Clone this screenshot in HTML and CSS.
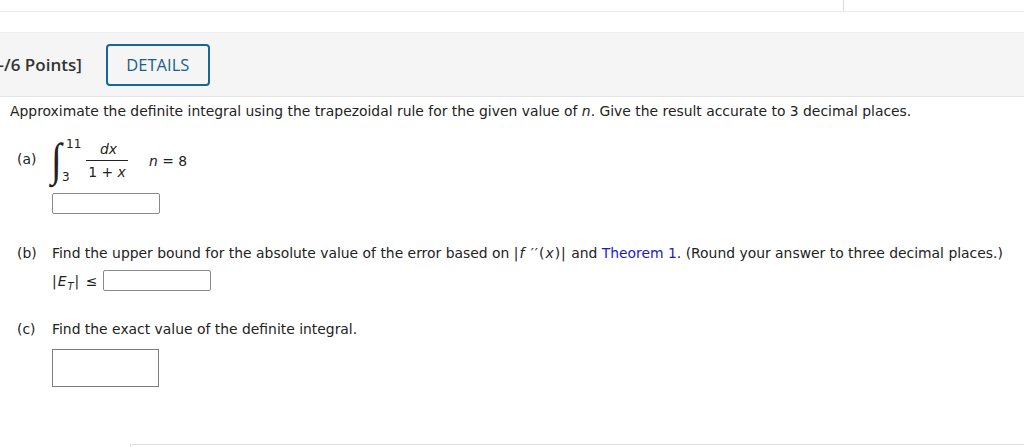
FILE: index.html
```html
<!DOCTYPE html>
<html>
<head>
<meta charset="utf-8">
<link rel="stylesheet" href="styles.css">
</head>
<body>
<div class="topbar"><div class="tb-left"></div><div class="tb-right"></div></div>
<div class="gap"></div>
<div class="header">
  <div class="points">[–/6 Points]</div>
  <button class="details">DETAILS</button>
</div>
<div class="question">
  <p class="prompt">Approximate the definite integral using the trapezoidal rule for the given value of <i>n</i>. Give the result accurate to 3 decimal places.</p>

  <div class="part part-a">
    <span class="label">(a)</span>
    <div class="body">
      <div class="math">
        <span class="int">∫</span>
        <span class="limits"><span class="up">11</span><span class="lo">3</span></span>
        <span class="frac"><span class="num"><i>dx</i></span><span class="den">1 + <i>x</i></span></span>
        <span class="neq"><i>n</i> = 8</span>
      </div>
      <span class="answer small"></span>
    </div>
  </div>

  <div class="part part-b">
    <span class="label">(b)</span>
    <div class="body">
      <p class="text">Find the upper bound for the absolute value of the error based on <span class="fpp">|<i>f</i> ′′(<i>x</i>)|</span> and <a class="link">Theorem 1</a>. (Round your answer to three decimal places.)</p>
      <div class="ineq"><span class="et">|<i>E<sub>T</sub></i>| ≤</span><span class="answer small"></span></div>
    </div>
  </div>

  <div class="part part-c">
    <span class="label">(c)</span>
    <div class="body">
      <p class="text">Find the exact value of the definite integral.</p>
      <span class="answer big"></span>
    </div>
  </div>
</div>
<div class="nextbox"></div>
</body>
</html>
```

FILE: styles.css
```css
* { box-sizing: border-box; }
html, body { margin: 0; padding: 0; background: #fff; overflow: hidden; }
body { width: 1024px; height: 447px; font-family: "DejaVu Sans", Verdana, sans-serif; font-size: 13.9px; color: #222; }

.topbar { display: flex; height: 12px; border-bottom: 1px solid #ececec; }
.tb-left { width: 844px; height: 11px; border-right: 1px solid #dcdcdc; }
.tb-right { flex: 1; }
.gap { height: 20px; }

.header {
  display: flex; align-items: center; gap: 24px;
  height: 65px;
  background: #f5f5f5;
  border-top: 1px solid #efefef;
  border-bottom: 1px solid #e4e4e4;
  font-family: "Open Sans", sans-serif;
}
.points { margin-left: -10px; font-size: 17px; font-weight: 600; color: #333; }
.details {
  width: 104px; height: 42px;
  background: transparent;
  border: 2px solid #15669e; border-radius: 4px;
  font-family: "Open Sans", sans-serif; font-size: 16.5px; font-weight: 500;
  color: #1a5e8f; padding: 0;
}

.question { padding: 6px 0 0 10px; }
.prompt { margin: 0; line-height: 16px; }

.part { display: grid; grid-template-columns: 35px 1fr; padding-left: 7px; }
.label { line-height: 16px; }
.body { display: flex; flex-direction: column; align-items: flex-start; }
.text { margin: 0; line-height: 16px; }
.fpp { letter-spacing: 1px; }

.part-a { margin-top: 19px; }
.part-a .label { align-self: start; margin-top: 13px; }
.math { display: flex; align-items: center; height: 44px; }
.int { font-family: "Liberation Serif", serif; font-size: 46px; line-height: 44px; height: 44px; transform: scaleX(0.85); margin-left: -2px; width: 14px; color: #222; }
.limits { display: flex; flex-direction: column; justify-content: space-between; height: 46px; font-size: 12px; line-height: 13px; width: 22px; margin-top: 2px; margin-left: 1px; }
.limits .up { padding-left: 1px; }
.limits .lo { margin-left: -3px; }
.frac { display: flex; flex-direction: column; align-items: center; width: 42px; margin-left: -1px; }
.num { line-height: 16px; padding-bottom: 3px; border-bottom: 1px solid #222; width: 100%; text-align: center; padding-left: 3px; }
.den { line-height: 16px; padding-top: 3px; }
.neq { margin-left: 21px; margin-top: 1px; }

.answer { display: block; border: 1px solid #8a8a8a; border-radius: 2px; background: #fff; }
.answer.small { width: 108px; height: 21px; }
.answer.big { width: 107px; height: 38px; border-color: #7d7d7d; border-radius: 0; }
.part-a .answer { margin-top: 11px; }

.part-b { margin-top: 31px; }
.link { color: #1a1acc; text-decoration: none; }
.ineq { display: flex; align-items: center; gap: 5px; margin-top: 9px; }
.et { letter-spacing: 1px; }
.et sub { font-size: 10px; vertical-align: -4px; line-height: 0; }

.part-c { margin-top: 30px; }
.part-c .answer { margin-top: 12px; }

.nextbox { margin: 57px 0 0 130px; height: 10px; border-top: 1px solid #dedede; border-left: 1px solid #dedede; }
```
